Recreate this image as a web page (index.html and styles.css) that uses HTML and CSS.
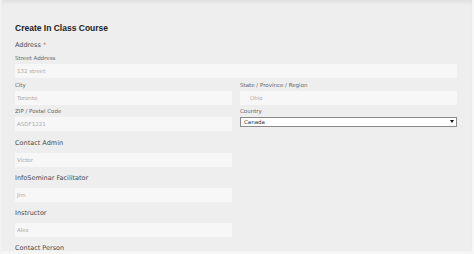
FILE: index.html
```html
<!DOCTYPE html>
<html>
<head>
<meta charset="utf-8">
<title>Create In Class Course</title>
<link rel="stylesheet" href="styles.css">
</head>
<body>
<div class="page">
  <div class="panel">
    <h2 class="title">Create In Class Course</h2>
    <div class="group-label address">Address <span class="req">*</span></div>
    <div class="field">
      <label class="small">Street Address</label>
      <input class="box" type="text" value="132 street">
    </div>
    <div class="cols">
      <div class="field">
        <label class="small">City</label>
        <input class="box" type="text" value="Toronto">
      </div>
      <div class="field">
        <label class="small">State / Province / Region</label>
        <input class="box wide-pad" type="text" value="Ohio">
      </div>
      <div class="field">
        <label class="small">ZIP / Postal Code</label>
        <input class="box" type="text" value="ASDF1221">
      </div>
      <div class="field">
        <label class="small">Country</label>
        <div class="sel-wrap">
          <select class="sel">
            <option>Canada</option>
          </select>
        </div>
      </div>
    </div>
    <div class="person">
      <label class="group-label">Contact Admin</label>
      <input class="box" type="text" value="Victor">
    </div>
    <div class="person">
      <label class="group-label">InfoSeminar Facilitator</label>
      <input class="box" type="text" value="Jim">
    </div>
    <div class="person">
      <label class="group-label">Instructor</label>
      <input class="box" type="text" value="Alex">
    </div>
    <div class="person">
      <label class="group-label">Contact Person</label>
    </div>
  </div>
</div>
</body>
</html>
```

FILE: styles.css
```css
html, body {
  margin: 0;
  padding: 0;
  background: #eeeeee;
  overflow: hidden;
}
.page {
  box-sizing: border-box;
  height: 254px;
  overflow: hidden;
  box-shadow: inset 0 4px 4px -2px rgba(0,0,0,0.07);
  border-left: 2px solid #f2f2f2;
  border-right: 2px solid #f7f7f7;
  border-bottom: 3px solid #f5f5f5;
}
.panel {
  padding: 23px 15px 0 13px;
  font-family: "DejaVu Sans", "Noto Sans", sans-serif;
  color: #555;
}
.title {
  margin: 0 0 8px 0;
  height: 10px;
  line-height: 10px;
  font-family: "Liberation Sans", Arial, sans-serif;
  font-size: 8.5px;
  font-weight: bold;
  color: #222;
}
.group-label {
  display: block;
  height: 8px;
  line-height: 8px;
  font-size: 6.5px;
  color: #4a4a4a;
  margin-bottom: 6px;
}
.address {
  margin-bottom: 6px;
}
.req {
  color: #c66;
}
.small {
  display: block;
  height: 7px;
  line-height: 7px;
  font-size: 5.5px;
  color: #666;
  margin-bottom: 2px;
}
.field {
  margin-bottom: 3.5px;
}
.cols {
  display: grid;
  grid-template-columns: 217px 217px;
  column-gap: 8px;
}
.person {
  width: 217px;
  margin-bottom: 7px;
}
.cols + .person {
  margin-top: 4.5px;
}
.box {
  display: block;
  box-sizing: border-box;
  width: 100%;
  height: 14px;
  border: 0;
  background: #f7f7f7;
  padding: 0 2px;
  font-family: "DejaVu Sans", sans-serif;
  font-size: 5.5px;
  color: #aaa;
  outline: none;
}
.wide-pad {
  padding-left: 10px;
}
.sel-wrap {
  position: relative;
}
.sel {
  display: block;
  box-sizing: border-box;
  width: 100%;
  height: 9.5px;
  border: 1px solid #8a8a8a;
  border-radius: 0;
  background: #fff;
  font-family: "DejaVu Sans", sans-serif;
  font-size: 5.5px;
  color: #333;
  padding: 0 3px;
  -webkit-appearance: none;
  appearance: none;
  outline: none;
}
.sel-wrap::after {
  content: "";
  position: absolute;
  right: 3px;
  top: 3px;
  border-left: 2px solid transparent;
  border-right: 2px solid transparent;
  border-top: 3px solid #111;
}
```
